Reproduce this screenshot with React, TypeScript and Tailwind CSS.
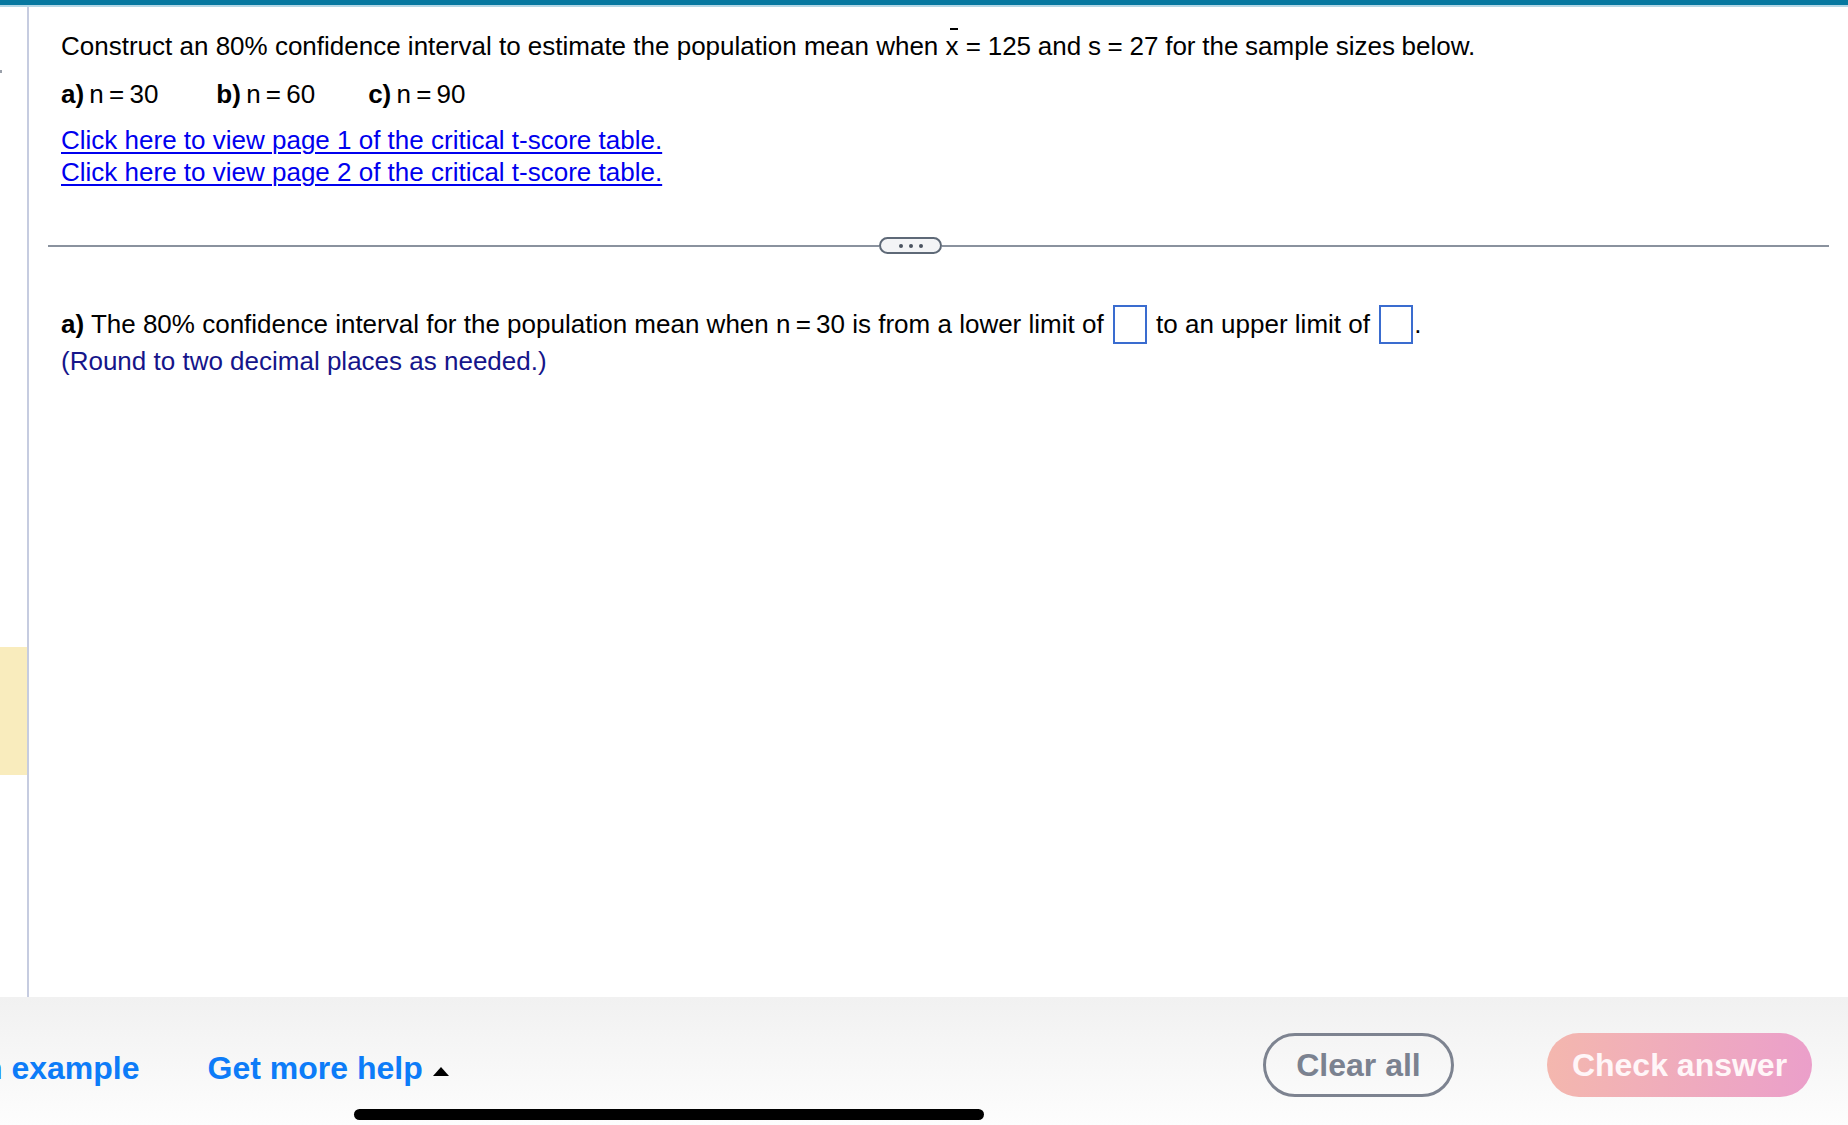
import React from 'react';

const font = { fontFamily: '"Liberation Sans", Arial, Helvetica, sans-serif' };

function AnswerBox() {
  return (
    <span className="mx-[2px] inline-block h-[39px] w-[34px] border-2 border-[#3a6ccf] bg-white align-[-11px]" />
  );
}

function XBar() {
  return (
    <span className="relative inline-block">
      x
      <span className="absolute left-[4px] top-[-2px] h-[1.5px] w-[8px] bg-black" />
    </span>
  );
}

export default function App() {
  return (
    <div
      className="relative flex h-[1125px] w-[1848px] flex-col overflow-hidden bg-white text-black"
      style={font}
    >
      {/* top bar */}
      <div className="h-[5px] bg-[#0678a0]" />
      <div className="h-[2px] bg-[#b3d7e6]" />

      <div className="flex flex-1">
        {/* left rail */}
        <div className="relative w-[29px] shrink-0 border-r-2 border-[#c6cce0]">
          <div className="absolute left-0 top-[63px] h-[3px] w-[2px] bg-[#9aa0aa]" />
          <div className="mt-[640px] h-[128px] w-[27px] bg-[#f9ecbd]" />
        </div>

        {/* question content */}
        <div className="flex-1 pt-[23px] text-[26px] leading-[32px]">
          <div className="pl-[32px]">
            <p>
              Construct an 80% confidence interval to estimate the population mean when <XBar />{' '}
              <span className="[word-spacing:-0.5px]">= 125 and s = 27 for the sample sizes below.</span>
            </p>
            <p className="mt-[16px] flex">
              <span className="[word-spacing:-2px]">
                <b>a)</b> n = 30
              </span>
              <span className="ml-[58px] [word-spacing:-2px]">
                <b>b)</b> n = 60
              </span>
              <span className="ml-[53px] [word-spacing:-2px]">
                <b>c)</b> n = 90
              </span>
            </p>
            <div className="mt-[14px] flex flex-col items-start text-[#0000ee]">
              <a href="#" className="underline decoration-[2px] underline-offset-[3px]">
                Click here to view page 1 of the critical t-score table.
              </a>
              <a href="#" className="underline decoration-[2px] underline-offset-[3px]">
                Click here to view page 2 of the critical t-score table.
              </a>
            </div>
          </div>

          {/* divider */}
          <div className="ml-[19px] mr-[19px] mt-[49px] flex h-[17px] items-center">
            <div className="h-[2px] w-[831px] bg-[#8a929e]" />
            <div className="flex h-[17px] w-[63px] items-center justify-center gap-[6px] rounded-full border-2 border-[#5e6977] bg-[#f3f4f6]">
              <span className="h-[4px] w-[4px] rounded-full bg-[#4b5360]" />
              <span className="h-[4px] w-[4px] rounded-full bg-[#4b5360]" />
              <span className="h-[4px] w-[4px] rounded-full bg-[#4b5360]" />
            </div>
            <div className="h-[2px] flex-1 bg-[#8a929e]" />
          </div>

          <div className="pl-[32px]">
            <p className="mt-[51px]">
              <b>a)</b> The 80% confidence interval for the population mean when{' '}
              <span className="[word-spacing:-2px]">n = 30</span> is from a lower limit of <AnswerBox /> to an upper
              limit of <AnswerBox />
              <span className="-ml-[1px]">.</span>
            </p>
            <p className="mt-px text-[#15158a]">(Round to two decimal places as needed.)</p>
          </div>
        </div>
      </div>

      {/* footer */}
      <div className="flex h-[128px] shrink-0 items-start bg-gradient-to-b from-[#f1f1f1] to-[#fdfdfd] pt-[36px]">
        <div className="mt-[19px] flex text-[32px] font-bold leading-[32px] text-[#0d7cf8]">
          <span className="ml-[-116px] whitespace-pre">View an example</span>
          <span className="ml-[68px] flex items-center">
            Get more help
            <svg width="16" height="9" viewBox="0 0 16 9" className="ml-[10px] mt-[6px]">
              <path d="M0 9 L8 0 L16 9 Z" fill="#000" />
            </svg>
          </span>
        </div>
        <div className="ml-auto mr-[36px] flex gap-[93px]">
          <button className="flex h-[64px] w-[191px] items-center justify-center rounded-full border-[3px] border-[#7d8390] text-[32px] font-bold text-[#7b8290]">
            Clear all
          </button>
          <button className="flex h-[64px] w-[265px] items-center justify-center rounded-full bg-gradient-to-r from-[#f4b7ae] to-[#eb9fca] text-[32px] font-bold text-[#fff6f8]">
            Check answer
          </button>
        </div>
      </div>

      {/* home indicator */}
      <div className="absolute left-[354px] top-[1109px] h-[11px] w-[630px] rounded-full bg-black" />
    </div>
  );
}
